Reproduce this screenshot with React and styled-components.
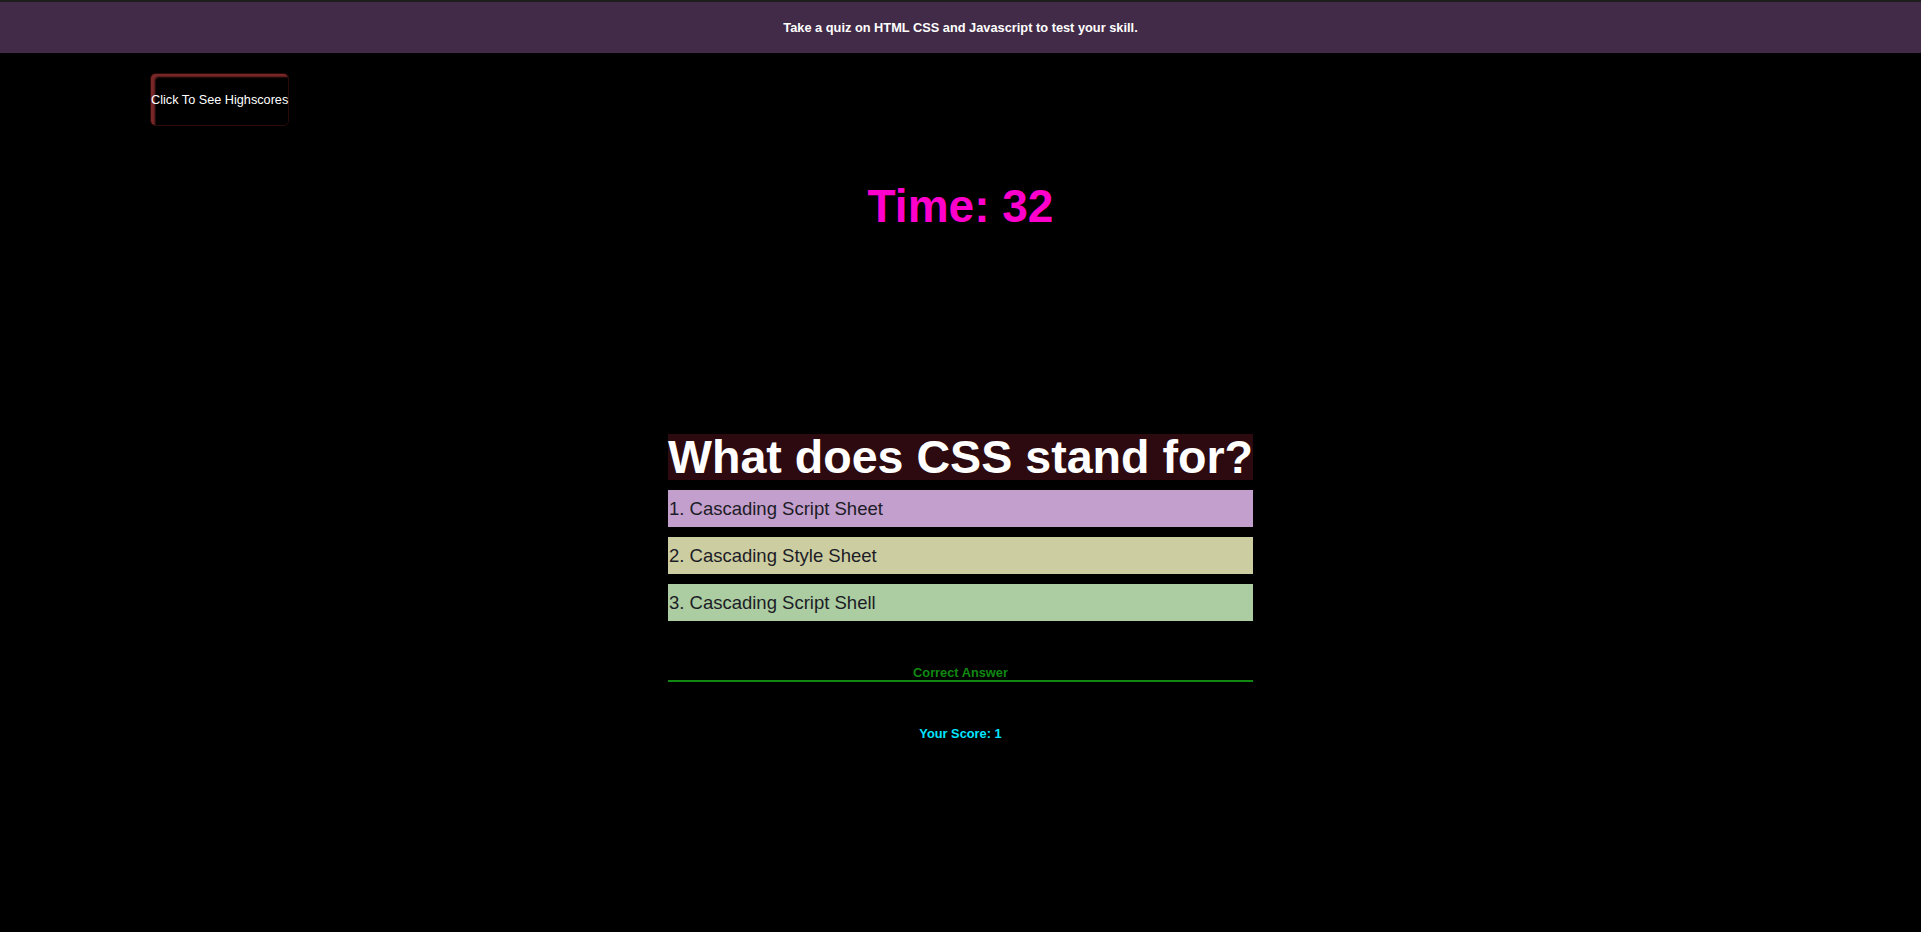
import React from 'react';
import styled, { createGlobalStyle } from 'styled-components';

const GlobalStyle = createGlobalStyle`
  html, body {
    margin: 0;
    padding: 0;
    background: #000000;
    font-family: "Liberation Sans", Arial, sans-serif;
  }
`;

const Banner = styled.header`
  height: 51px;
  border-top: 2px solid #1e1e1e;
  background: #422b48;
  display: flex;
  align-items: center;
  justify-content: center;
  color: #ffffff;
  font-size: 12.8px;
  font-weight: bold;
`;

const Page = styled.main`
  display: flex;
  flex-direction: column;
`;

const HighscoreButton = styled.button`
  align-self: flex-start;
  width: 139px;
  height: 53px;
  margin: 20px 0 0 150px;
  padding: 0;
  background: #000000;
  color: #ffffff;
  font-family: "Liberation Sans", Arial, sans-serif;
  font-size: 12.7px;
  white-space: nowrap;
  border: 1px solid #2a0909;
  border-radius: 5px;
  box-shadow: inset 4px 3px 2px #7a2727;
  cursor: pointer;
`;

const Timer = styled.h2`
  margin: 53px 0 0;
  text-align: center;
  color: #ff00cc;
  font-size: 46px;
  font-weight: bold;
`;

const Quiz = styled.section`
  width: fit-content;
  margin: 201px auto 0;
  display: flex;
  flex-direction: column;
`;

const Question = styled.h1`
  margin: 0;
  background: #2d0a0f;
  color: #ffffff;
  font-size: 46.6px;
  line-height: 46px;
  font-weight: bold;
  white-space: nowrap;
`;

const Answers = styled.ol`
  list-style: none;
  margin: 10px 0 0;
  padding: 0;
  display: flex;
  flex-direction: column;
  gap: 10px;
`;

const Answer = styled.li`
  background: ${(p) => p.$bg};
  color: #1c1c26;
  font-size: 18.5px;
  line-height: 21px;
  padding: 8px 1px;
  cursor: pointer;
`;

const Feedback = styled.p`
  margin: 44px 0 0;
  text-align: center;
  color: #118811;
  font-size: 12.8px;
  font-weight: bold;
  border-bottom: 2px solid #118811;
`;

const Score = styled.p`
  margin: 44px 0 0;
  text-align: center;
  color: #00e5ff;
  font-size: 12.8px;
  font-weight: bold;
`;

const answers = [
  { text: '1. Cascading Script Sheet', bg: '#c39fcd' },
  { text: '2. Cascading Style Sheet', bg: '#cccea2' },
  { text: '3. Cascading Script Shell', bg: '#abcda1' },
];

export default function App() {
  return (
    <>
      <GlobalStyle />
      <Banner>Take a quiz on HTML CSS and Javascript to test your skill.</Banner>
      <Page>
        <HighscoreButton>Click To See Highscores</HighscoreButton>
        <Timer>Time: 32</Timer>
        <Quiz>
          <Question>What does CSS stand for?</Question>
          <Answers>
            {answers.map((a) => (
              <Answer key={a.text} $bg={a.bg}>
                {a.text}
              </Answer>
            ))}
          </Answers>
          <Feedback>Correct Answer</Feedback>
          <Score>Your Score: 1</Score>
        </Quiz>
      </Page>
    </>
  );
}
